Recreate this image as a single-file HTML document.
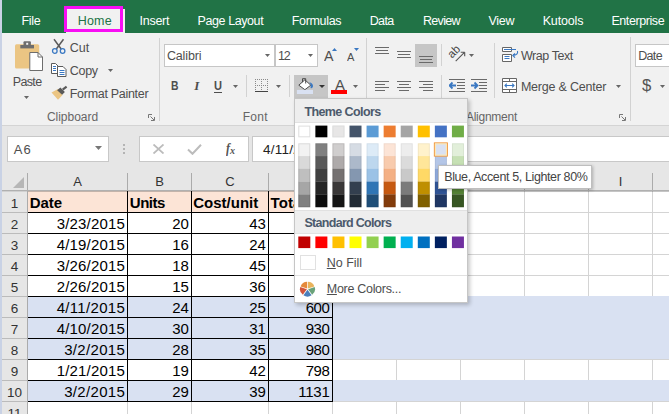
<!DOCTYPE html>
<html><head><meta charset="utf-8"><title>Excel</title>
<style>
html,body{margin:0;padding:0;}
body{width:669px;height:414px;overflow:hidden;position:relative;font-family:"Liberation Sans", sans-serif;background:#e6e6e6;}
#app{position:absolute;left:0;top:0;width:669px;height:414px;overflow:hidden;}
#app div,#app svg,#app span{position:absolute;}
#app span{white-space:nowrap;line-height:20px;}
</style></head><body><div id="app">
<div style="left:0px;top:0px;width:669px;height:414px;background:#e6e6e6;"></div>
<div style="left:0px;top:0px;width:2px;height:414px;background:#c9d2e5;"></div>
<div style="left:2px;top:0px;width:667px;height:33px;background:#217346;"></div>
<div style="left:2px;top:33px;width:667px;height:92px;background:#f1f1f1;"></div>
<div style="left:2px;top:125px;width:667px;height:1px;background:#d4d4d4;"></div>
<div style="left:66px;top:9px;width:59px;height:24px;background:#f1f1f1;"></div>
<div style="left:64px;top:6px;width:53px;height:20px;background:transparent;border:3px solid #f80ef4;"></div>
<span style="left:21.38px;top:11.40px;font-size:12.5px;color:#fff;letter-spacing:-0.235px;">File</span>
<span style="left:77.78px;top:11.40px;font-size:12.5px;color:#217346;letter-spacing:0.169px;">Home</span>
<span style="left:139.57px;top:11.40px;font-size:12.5px;color:#fff;letter-spacing:-0.283px;">Insert</span>
<span style="left:197.57px;top:11.40px;font-size:12.5px;color:#fff;letter-spacing:-0.415px;">Page Layout</span>
<span style="left:291.77px;top:11.40px;font-size:12.5px;color:#fff;letter-spacing:-0.335px;">Formulas</span>
<span style="left:369.68px;top:11.40px;font-size:12.5px;color:#fff;letter-spacing:-0.619px;">Data</span>
<span style="left:422.88px;top:11.40px;font-size:12.5px;color:#fff;letter-spacing:-0.650px;">Review</span>
<span style="left:488.38px;top:11.40px;font-size:12.5px;color:#fff;letter-spacing:-0.242px;">View</span>
<span style="left:542.67px;top:11.40px;font-size:12.5px;color:#fff;letter-spacing:-0.159px;">Kutools</span>
<span style="left:611.38px;top:11.40px;font-size:12.5px;color:#fff;letter-spacing:-0.415px;">Enterprise</span>
<span style="left:12.68px;top:72.00px;font-size:12.5px;color:#4e4e4e;letter-spacing:-0.630px;">Paste</span>
<span style="left:69.78px;top:38.00px;font-size:12.5px;color:#4e4e4e;letter-spacing:0.048px;">Cut</span>
<span style="left:69.78px;top:60.70px;font-size:12.5px;color:#4e4e4e;letter-spacing:-0.279px;">Copy</span>
<span style="left:69.78px;top:83.50px;font-size:12.5px;color:#4e4e4e;letter-spacing:-0.294px;">Format Painter</span>
<span style="left:46.90px;top:107.20px;font-size:12px;color:#666;letter-spacing:-0.022px;">Clipboard</span>
<span style="left:242.80px;top:107.20px;font-size:12px;color:#666;letter-spacing:0.228px;">Font</span>
<span style="left:465.90px;top:107.20px;font-size:12px;color:#666;letter-spacing:-0.247px;">Alignment</span>
<div style="left:159px;top:38px;width:1px;height:83px;background:#d2d2d2;"></div>
<div style="left:366px;top:38px;width:1px;height:83px;background:#d2d2d2;"></div>
<div style="left:630px;top:37px;width:1px;height:84px;background:#d2d2d2;"></div>
<div style="left:494px;top:43px;width:1px;height:55px;background:#d2d2d2;"></div>
<div style="left:441px;top:44px;width:1px;height:22px;background:#d2d2d2;"></div>
<div style="left:441px;top:75px;width:1px;height:23px;background:#d2d2d2;"></div>
<div style="left:246px;top:75px;width:1px;height:22px;background:#d2d2d2;"></div>
<div style="left:289px;top:75px;width:1px;height:22px;background:#d2d2d2;"></div>
<svg style="left:24.0px;top:95.7px" width="5" height="3" viewBox="0 0 5 3"><path d="M0 0H5L2.5 3Z" fill="#666"/></svg>
<svg style="left:108.0px;top:69.0px" width="5" height="3" viewBox="0 0 5 3"><path d="M0 0H5L2.5 3Z" fill="#666"/></svg>
<svg style="left:14px;top:40px" width="30" height="32" viewBox="0 0 30 32">
<rect x="1" y="4.200" width="24.200" height="24.200" rx="1.500" fill="#ebc583"/>
<rect x="6.300" y="5" width="13.700" height="3.400" fill="#6d6d6d"/><rect x="9.500" y="1.300" width="7.400" height="4.500" rx="1" fill="#6d6d6d"/><rect x="12.200" y="2.800" width="2" height="2" fill="#f1f1f1"/>
<path d="M15.800 12.500h8.200l4.500 4.500v13.500h-12.700z" fill="#fff" stroke="#6d6d6d" stroke-width="1"/><path d="M24 12.500v4.500h4.500" fill="none" stroke="#6d6d6d" stroke-width="1"/>
</svg>
<svg style="left:51px;top:38px" width="17" height="17" viewBox="0 0 17 17">
<path d="M3 1.200L10.200 11M12.500 1.200L5.300 11" stroke="#5a5a5a" stroke-width="1.500" fill="none"/>
<circle cx="3.800" cy="13" r="2.300" fill="none" stroke="#3a78c2" stroke-width="1.300"/><circle cx="11.600" cy="13" r="2.300" fill="none" stroke="#3a78c2" stroke-width="1.300"/>
</svg>
<svg style="left:50px;top:62px" width="18" height="16" viewBox="0 0 18 16">
<path d="M1.500 1.500h4l2.500 2.500v7.500h-6.500z" fill="#fff" stroke="#5a5a5a"/>
<path d="M3 4.500h3M3 6.500h3M3 8.500h3" stroke="#3a78c2" stroke-width="1"/>
<path d="M7.500 4.500h5.500l3 3v7h-8.500z" fill="#fff" stroke="#5a5a5a"/>
<path d="M9.500 8.500h5M9.500 10.500h5M9.500 12.500h5" stroke="#3a78c2" stroke-width="1"/>
</svg>
<svg style="left:50px;top:85px" width="18" height="16" viewBox="0 0 18 16">
<path d="M1.500 7.500L8 4L12.500 10L8 14.700z" fill="#ebc583"/>
<path d="M7.100 5.200L10.400 2.400L14.900 6.900L12.100 9.700z" fill="#5a5a5a"/>
<path d="M12.700 4.700L16.600 1.700" stroke="#5a5a5a" stroke-width="2.200"/>
</svg>
<svg style="left:148px;top:114px" width="7" height="7" viewBox="0 0 7 7"><path d="M0.500 4V0.500H4" fill="none" stroke="#777"/><path d="M2.500 2.500L6 6M6.500 3V6.500H3" fill="none" stroke="#777"/></svg>
<svg style="left:298px;top:114px" width="7" height="7" viewBox="0 0 7 7"><path d="M0.500 4V0.500H4" fill="none" stroke="#777"/><path d="M2.500 2.500L6 6M6.500 3V6.500H3" fill="none" stroke="#777"/></svg>
<svg style="left:619px;top:114px" width="7" height="7" viewBox="0 0 7 7"><path d="M0.500 4V0.500H4" fill="none" stroke="#777"/><path d="M2.500 2.500L6 6M6.500 3V6.500H3" fill="none" stroke="#777"/></svg>
<div style="left:164px;top:44px;width:111px;height:23px;background:#fff;border:1px solid #c6c6c6;box-sizing:border-box;"></div>
<div style="left:275px;top:44px;width:43px;height:23px;background:#fff;border:1px solid #c6c6c6;box-sizing:border-box;"></div>
<span style="left:166.88px;top:45.50px;font-size:12.5px;color:#4e4e4e;letter-spacing:-0.115px;">Calibri</span>
<span style="left:277.88px;top:45.50px;font-size:12.5px;color:#4e4e4e;letter-spacing:-1.156px;">12</span>
<svg style="left:264.5px;top:54.0px" width="5" height="3" viewBox="0 0 5 3"><path d="M0 0H5L2.5 3Z" fill="#666"/></svg>
<svg style="left:308.0px;top:54.0px" width="5" height="3" viewBox="0 0 5 3"><path d="M0 0H5L2.5 3Z" fill="#666"/></svg>
<span style="left:170.50px;top:75.50px;font-size:12.5px;color:#4e4e4e;font-weight:bold;transform:scaleX(0.830);transform-origin:0 50%;">B</span>
<span style="left:194.17px;top:76.30px;font-size:13px;color:#4e4e4e;font-weight:bold;font-style:italic;font-family:'Liberation Serif',serif;">I</span>
<span style="left:214.30px;top:75.80px;font-size:12.5px;color:#4e4e4e;font-weight:bold;text-decoration:underline;text-underline-offset:1.5px;transform:scaleX(0.886);transform-origin:0 50%;">U</span>
<svg style="left:232.5px;top:84.5px" width="5" height="3" viewBox="0 0 5 3"><path d="M0 0H5L2.5 3Z" fill="#666"/></svg>
<svg style="left:275.5px;top:84.5px" width="5" height="3" viewBox="0 0 5 3"><path d="M0 0H5L2.5 3Z" fill="#666"/></svg>
<svg style="left:255px;top:79px" width="13" height="13" viewBox="0 0 13 13" shape-rendering="crispEdges"><rect x="0" y="0" width="1" height="1" fill="#8a8a8a"/><rect x="2" y="0" width="1" height="1" fill="#8a8a8a"/><rect x="4" y="0" width="1" height="1" fill="#8a8a8a"/><rect x="6" y="0" width="1" height="1" fill="#8a8a8a"/><rect x="8" y="0" width="1" height="1" fill="#8a8a8a"/><rect x="10" y="0" width="1" height="1" fill="#8a8a8a"/><rect x="12" y="0" width="1" height="1" fill="#8a8a8a"/><rect x="0" y="6" width="1" height="1" fill="#8a8a8a"/><rect x="2" y="6" width="1" height="1" fill="#8a8a8a"/><rect x="4" y="6" width="1" height="1" fill="#8a8a8a"/><rect x="6" y="6" width="1" height="1" fill="#8a8a8a"/><rect x="8" y="6" width="1" height="1" fill="#8a8a8a"/><rect x="10" y="6" width="1" height="1" fill="#8a8a8a"/><rect x="12" y="6" width="1" height="1" fill="#8a8a8a"/><rect x="0" y="0" width="1" height="1" fill="#8a8a8a"/><rect x="0" y="2" width="1" height="1" fill="#8a8a8a"/><rect x="0" y="4" width="1" height="1" fill="#8a8a8a"/><rect x="0" y="6" width="1" height="1" fill="#8a8a8a"/><rect x="0" y="8" width="1" height="1" fill="#8a8a8a"/><rect x="0" y="10" width="1" height="1" fill="#8a8a8a"/><rect x="6" y="0" width="1" height="1" fill="#8a8a8a"/><rect x="6" y="2" width="1" height="1" fill="#8a8a8a"/><rect x="6" y="4" width="1" height="1" fill="#8a8a8a"/><rect x="6" y="6" width="1" height="1" fill="#8a8a8a"/><rect x="6" y="8" width="1" height="1" fill="#8a8a8a"/><rect x="6" y="10" width="1" height="1" fill="#8a8a8a"/><rect x="12" y="0" width="1" height="1" fill="#8a8a8a"/><rect x="12" y="2" width="1" height="1" fill="#8a8a8a"/><rect x="12" y="4" width="1" height="1" fill="#8a8a8a"/><rect x="12" y="6" width="1" height="1" fill="#8a8a8a"/><rect x="12" y="8" width="1" height="1" fill="#8a8a8a"/><rect x="12" y="10" width="1" height="1" fill="#8a8a8a"/><rect x="0" y="12" width="13" height="1" fill="#444"/></svg>
<div style="left:294px;top:75px;width:34px;height:23px;background:#c6c6c6;"></div>
<svg style="left:296px;top:76px" width="19" height="19" viewBox="0 0 19 19">
<path d="M2.800 9.200L8.900 3.800L14.800 9.200L8.900 13.700Z" fill="#fff" stroke="#4a4a4a" stroke-width="1"/>
<path d="M6.500 6.200V2.700H9.700V7.500" stroke="#4a4a4a" stroke-width="1" fill="none"/>
<path d="M13.300 6.200C16 6.500 18 9.500 16.500 11.500C15.500 12.800 14.300 12.500 14.600 11C14.900 9.500 14.800 8 13.300 6.200Z" fill="#3a78c2"/>
<rect x="0.900" y="13.900" width="16.100" height="4.100" fill="#d9e1f2"/></svg>
<svg style="left:318.5px;top:84.9px" width="6" height="3" viewBox="0 0 6 3"><path d="M0 0H6L3.0 3Z" fill="#333"/></svg>
<span style="left:324.30px;top:46.30px;font-size:14px;color:#4e4e4e;transform:scaleX(1.017);transform-origin:0 50%;">A</span>
<span style="left:347.00px;top:47.00px;font-size:11.5px;color:#4e4e4e;transform:scaleX(0.965);transform-origin:0 50%;">A</span>
<svg style="left:332px;top:47.500px" width="5" height="3" viewBox="0 0 5 3"><path d="M0 3H5L2.500 0Z" fill="#3a78c2"/></svg>
<svg style="left:354.200px;top:47.500px" width="5" height="3" viewBox="0 0 5 3"><path d="M0 0H5L2.500 3Z" fill="#3a78c2"/></svg>
<span style="left:335.00px;top:74.90px;font-size:14px;color:#4e4e4e;transform:scaleX(1.060);transform-origin:0 50%;">A</span>
<div style="left:331px;top:90px;width:16px;height:4px;background:#ff0000;"></div>
<svg style="left:353.0px;top:85.0px" width="5" height="3" viewBox="0 0 5 3"><path d="M0 0H5L2.5 3Z" fill="#666"/></svg>
<div style="left:375.0px;top:47px;width:14px;height:1px;background:#6a6a6a;"></div>
<div style="left:376.0px;top:50px;width:12px;height:1px;background:#6a6a6a;"></div>
<div style="left:375.0px;top:53px;width:14px;height:1px;background:#6a6a6a;"></div>
<div style="left:397.0px;top:51px;width:14px;height:1px;background:#6a6a6a;"></div>
<div style="left:398.0px;top:54px;width:12px;height:1px;background:#6a6a6a;"></div>
<div style="left:397.0px;top:57px;width:14px;height:1px;background:#6a6a6a;"></div>
<div style="left:415px;top:44px;width:22px;height:23px;background:#c6c6c6;"></div>
<div style="left:419.0px;top:56px;width:14px;height:1px;background:#6a6a6a;"></div>
<div style="left:420.0px;top:59px;width:12px;height:1px;background:#6a6a6a;"></div>
<div style="left:419.0px;top:62px;width:14px;height:1px;background:#6a6a6a;"></div>
<div style="left:375px;top:81px;width:14px;height:1px;background:#6a6a6a;"></div>
<div style="left:375px;top:84px;width:10px;height:1px;background:#6a6a6a;"></div>
<div style="left:375px;top:87px;width:14px;height:1px;background:#6a6a6a;"></div>
<div style="left:375px;top:90px;width:10px;height:1px;background:#6a6a6a;"></div>
<div style="left:397.0px;top:81px;width:14px;height:1px;background:#6a6a6a;"></div>
<div style="left:399.0px;top:84px;width:10px;height:1px;background:#6a6a6a;"></div>
<div style="left:397.0px;top:87px;width:14px;height:1px;background:#6a6a6a;"></div>
<div style="left:399.0px;top:90px;width:10px;height:1px;background:#6a6a6a;"></div>
<div style="left:419px;top:81px;width:14px;height:1px;background:#6a6a6a;"></div>
<div style="left:423px;top:84px;width:10px;height:1px;background:#6a6a6a;"></div>
<div style="left:419px;top:87px;width:14px;height:1px;background:#6a6a6a;"></div>
<div style="left:423px;top:90px;width:10px;height:1px;background:#6a6a6a;"></div>
<svg style="left:446px;top:44px" width="22" height="20" viewBox="0 0 22 20">
<text x="0" y="0" font-size="11.500" font-family="Liberation Sans, sans-serif" fill="#444" transform="translate(6 14.800) rotate(-45)">ab</text>
<path d="M9.700 17.200L18.700 8.200M18.700 8.200h-4M18.700 8.200v4" stroke="#555" stroke-width="1.100" fill="none"/></svg>
<svg style="left:469.0px;top:54.0px" width="5" height="3" viewBox="0 0 5 3"><path d="M0 0H5L2.5 3Z" fill="#666"/></svg>
<svg style="left:449px;top:79px" width="16" height="13" viewBox="0 0 16 13"><path d="M0 0.500h16M8 3.500h8M8 6.500h8M8 9.500h8M0 12.500h16" stroke="#6a6a6a"/><path d="M1 6.500h6M3.500 3.500l-3 3 3 3" stroke="#3a78c2" stroke-width="1.800" fill="none"/></svg>
<svg style="left:471px;top:79px" width="16" height="13" viewBox="0 0 16 13"><path d="M0 0.500h16M8 3.500h8M8 6.500h8M8 9.500h8M0 12.500h16" stroke="#6a6a6a"/><path d="M0 6.500h6M3.500 3.500l3 3-3 3" stroke="#3a78c2" stroke-width="1.800" fill="none"/></svg>
<svg style="left:502px;top:47px" width="17" height="15" viewBox="0 0 17 15">
<path d="M0.500 0.500h9v4h-9zM0.500 7.500h9v7h-9z" fill="#fff" stroke="#666"/>
<path d="M2 2.500h12M2.500 9.500h5M2.500 11.500h5" stroke="#3a78c2" stroke-width="1"/>
<path d="M15.500 4c.6 2.500-1 4.500-4.500 4.500M13 6.300L10.800 8.500l2.200 2.200" fill="none" stroke="#3a78c2" stroke-width="1.100"/></svg>
<span style="left:520.88px;top:46.20px;font-size:12.5px;color:#4e4e4e;letter-spacing:-0.420px;">Wrap Text</span>
<svg style="left:502px;top:78px" width="15" height="15" viewBox="0 0 15 15">
<path d="M0.500 0.500h14v14h-14zM0.500 3.500h14M0.500 11.500h14M7.500 0.500v3M7.500 11.500v3" fill="#fff" stroke="#666"/>
<path d="M3 7.500h9M4.800 5.700l-1.800 1.800 1.800 1.800M10.200 5.700l1.800 1.800-1.800 1.800" fill="none" stroke="#3a78c2" stroke-width="1.100"/></svg>
<span style="left:520.88px;top:76.50px;font-size:12.5px;color:#4e4e4e;letter-spacing:-0.214px;">Merge &amp; Center</span>
<svg style="left:616.0px;top:85.0px" width="5" height="3" viewBox="0 0 5 3"><path d="M0 0H5L2.5 3Z" fill="#666"/></svg>
<div style="left:635px;top:44px;width:40px;height:23px;background:#fff;border:1px solid #c6c6c6;box-sizing:border-box;"></div>
<span style="left:638.17px;top:46.00px;font-size:12.5px;color:#4e4e4e;letter-spacing:-0.652px;">Date</span>
<span style="left:641.90px;top:75.90px;font-size:17px;color:#555;transform:scaleX(0.982);transform-origin:0 50%;">$</span>
<svg style="left:659.5px;top:85.0px" width="5" height="3" viewBox="0 0 5 3"><path d="M0 0H5L2.5 3Z" fill="#666"/></svg>
<div style="left:7px;top:136px;width:102px;height:26px;background:#fff;border:1px solid #c8c8c8;box-sizing:border-box;"></div>
<span style="left:13.65px;top:139.50px;font-size:13px;color:#4e4e4e;letter-spacing:1.094px;">A6</span>
<svg style="left:95.0px;top:146.0px" width="7" height="4" viewBox="0 0 7 4"><path d="M0 0H7L3.5 4Z" fill="#777"/></svg>
<div style="left:123px;top:144px;width:2px;height:2px;background:#b4b4b4;"></div>
<div style="left:123px;top:148px;width:2px;height:2px;background:#b4b4b4;"></div>
<div style="left:123px;top:152px;width:2px;height:2px;background:#b4b4b4;"></div>
<div style="left:139px;top:136px;width:110px;height:26px;background:#fff;border:1px solid #c8c8c8;box-sizing:border-box;"></div>
<div style="left:252px;top:136px;width:420px;height:26px;background:#fff;border:1px solid #c8c8c8;box-sizing:border-box;"></div>
<svg style="left:152.500px;top:144px" width="11" height="10" viewBox="0 0 11 10"><path d="M0.500 0.500L10.500 9.500M10.500 0.500L0.500 9.500" stroke="#bcbcbc" stroke-width="1.800"/></svg>
<svg style="left:187px;top:144px" width="15" height="11" viewBox="0 0 15 11"><path d="M1 5.500L5.500 9.800L14 0.800" stroke="#bcbcbc" stroke-width="2" fill="none"/></svg>
<span style="left:225.50px;top:138.50px;font-size:14px;color:#555;font-weight:bold;font-style:italic;font-family:'Liberation Serif',serif;transform:scaleX(0.856);transform-origin:0 50%;">f</span>
<span style="left:229.50px;top:141.00px;font-size:9.5px;color:#555;font-weight:bold;font-style:italic;font-family:'Liberation Serif',serif;transform:scaleX(1.053);transform-origin:0 50%;">x</span>
<span style="left:263.12px;top:139.60px;font-size:13.5px;color:#222;letter-spacing:0.186px;">4/11/2015</span>
<svg style="left:13px;top:177px" width="11" height="11" viewBox="0 0 11 11"><path d="M11 0V11H0Z" fill="#b6b6b6"/></svg>
<div style="left:27px;top:173px;width:1px;height:18px;background:#ababab;"></div>
<span style="left:73.16px;top:172.30px;font-size:13px;color:#333;text-align:center;">A</span>
<div style="left:127px;top:173px;width:1px;height:18px;background:#ababab;"></div>
<span style="left:155.16px;top:172.30px;font-size:13px;color:#333;text-align:center;">B</span>
<div style="left:191px;top:173px;width:1px;height:18px;background:#ababab;"></div>
<span style="left:225.30px;top:172.30px;font-size:13px;color:#333;text-align:center;">C</span>
<div style="left:268px;top:173px;width:1px;height:18px;background:#ababab;"></div>
<span style="left:295.80px;top:172.30px;font-size:13px;color:#333;text-align:center;">D</span>
<div style="left:332px;top:173px;width:1px;height:18px;background:#ababab;"></div>
<span style="left:360.16px;top:172.30px;font-size:13px;color:#333;text-align:center;">E</span>
<div style="left:396px;top:173px;width:1px;height:18px;background:#ababab;"></div>
<span style="left:424.52px;top:172.30px;font-size:13px;color:#333;text-align:center;">F</span>
<div style="left:460px;top:173px;width:1px;height:18px;background:#ababab;"></div>
<span style="left:487.44px;top:172.30px;font-size:13px;color:#333;text-align:center;">G</span>
<div style="left:524px;top:173px;width:1px;height:18px;background:#ababab;"></div>
<span style="left:551.80px;top:172.30px;font-size:13px;color:#333;text-align:center;">H</span>
<div style="left:588px;top:173px;width:1px;height:18px;background:#ababab;"></div>
<span style="left:618.69px;top:172.30px;font-size:13px;color:#333;text-align:center;">I</span>
<div style="left:652px;top:173px;width:1px;height:18px;background:#ababab;"></div>
<span style="left:681.25px;top:172.30px;font-size:13px;color:#333;text-align:center;">J</span>
<div style="left:2px;top:190px;width:667px;height:1px;background:#b0b0b0;"></div>
<div style="left:2px;top:191px;width:26px;height:1px;background:#d0d0d0;"></div>
<div style="left:28px;top:191px;width:641px;height:223px;background:#fff;"></div>
<div style="left:332px;top:191px;width:1px;height:223px;background:#d4d4d4;"></div>
<div style="left:396px;top:191px;width:1px;height:223px;background:#d4d4d4;"></div>
<div style="left:460px;top:191px;width:1px;height:223px;background:#d4d4d4;"></div>
<div style="left:524px;top:191px;width:1px;height:223px;background:#d4d4d4;"></div>
<div style="left:588px;top:191px;width:1px;height:223px;background:#d4d4d4;"></div>
<div style="left:652px;top:191px;width:1px;height:223px;background:#d4d4d4;"></div>
<div style="left:716px;top:191px;width:1px;height:223px;background:#d4d4d4;"></div>
<div style="left:332px;top:212px;width:337px;height:1px;background:#d4d4d4;"></div>
<div style="left:332px;top:233px;width:337px;height:1px;background:#d4d4d4;"></div>
<div style="left:332px;top:254px;width:337px;height:1px;background:#d4d4d4;"></div>
<div style="left:332px;top:275px;width:337px;height:1px;background:#d4d4d4;"></div>
<div style="left:332px;top:296px;width:337px;height:1px;background:#d4d4d4;"></div>
<div style="left:332px;top:317px;width:337px;height:1px;background:#d4d4d4;"></div>
<div style="left:332px;top:338px;width:337px;height:1px;background:#d4d4d4;"></div>
<div style="left:332px;top:359px;width:337px;height:1px;background:#d4d4d4;"></div>
<div style="left:332px;top:380px;width:337px;height:1px;background:#d4d4d4;"></div>
<div style="left:332px;top:401px;width:337px;height:1px;background:#d4d4d4;"></div>
<div style="left:332px;top:422px;width:337px;height:1px;background:#d4d4d4;"></div>
<div style="left:127px;top:402px;width:1px;height:12px;background:#d4d4d4;"></div>
<div style="left:191px;top:402px;width:1px;height:12px;background:#d4d4d4;"></div>
<div style="left:268px;top:402px;width:1px;height:12px;background:#d4d4d4;"></div>
<div style="left:27px;top:191px;width:1px;height:223px;background:#ababab;"></div>
<span style="left:10.74px;top:194.00px;font-size:13.5px;color:#333;">1</span>
<span style="left:10.74px;top:215.00px;font-size:13.5px;color:#333;">2</span>
<span style="left:10.74px;top:236.00px;font-size:13.5px;color:#333;">3</span>
<span style="left:10.74px;top:257.00px;font-size:13.5px;color:#333;">4</span>
<span style="left:10.74px;top:278.00px;font-size:13.5px;color:#333;">5</span>
<span style="left:10.74px;top:299.00px;font-size:13.5px;color:#333;">6</span>
<span style="left:10.74px;top:320.00px;font-size:13.5px;color:#333;">7</span>
<span style="left:10.74px;top:341.00px;font-size:13.5px;color:#333;">8</span>
<span style="left:10.74px;top:362.00px;font-size:13.5px;color:#333;">9</span>
<span style="left:6.98px;top:383.00px;font-size:13.5px;color:#333;">10</span>
<span style="left:7.49px;top:404.00px;font-size:13.5px;color:#333;">11</span>
<div style="left:2px;top:212px;width:25px;height:1px;background:#bbbbbb;"></div>
<div style="left:2px;top:233px;width:25px;height:1px;background:#bbbbbb;"></div>
<div style="left:2px;top:254px;width:25px;height:1px;background:#bbbbbb;"></div>
<div style="left:2px;top:275px;width:25px;height:1px;background:#bbbbbb;"></div>
<div style="left:2px;top:296px;width:25px;height:1px;background:#bbbbbb;"></div>
<div style="left:2px;top:317px;width:25px;height:1px;background:#bbbbbb;"></div>
<div style="left:2px;top:338px;width:25px;height:1px;background:#bbbbbb;"></div>
<div style="left:2px;top:359px;width:25px;height:1px;background:#bbbbbb;"></div>
<div style="left:2px;top:380px;width:25px;height:1px;background:#bbbbbb;"></div>
<div style="left:2px;top:401px;width:25px;height:1px;background:#bbbbbb;"></div>
<div style="left:2px;top:422px;width:25px;height:1px;background:#bbbbbb;"></div>
<div style="left:28px;top:191px;width:305px;height:21px;background:#fce4d6;"></div>
<div style="left:28px;top:296px;width:641px;height:63px;background:#d9e1f2;"></div>
<div style="left:28px;top:380px;width:641px;height:21px;background:#d9e1f2;"></div>
<div style="left:28px;top:191px;width:641px;height:1px;background:rgba(90,90,90,0.35);"></div>
<div style="left:127px;top:191px;width:1px;height:211px;background:#000;"></div>
<div style="left:191px;top:191px;width:1px;height:211px;background:#000;"></div>
<div style="left:268px;top:191px;width:1px;height:211px;background:#000;"></div>
<div style="left:332px;top:191px;width:1px;height:211px;background:#000;"></div>
<div style="left:28px;top:212px;width:305px;height:1px;background:#000;"></div>
<div style="left:28px;top:233px;width:305px;height:1px;background:#000;"></div>
<div style="left:28px;top:254px;width:305px;height:1px;background:#000;"></div>
<div style="left:28px;top:275px;width:305px;height:1px;background:#000;"></div>
<div style="left:28px;top:296px;width:305px;height:1px;background:#000;"></div>
<div style="left:28px;top:317px;width:305px;height:1px;background:#000;"></div>
<div style="left:28px;top:338px;width:305px;height:1px;background:#000;"></div>
<div style="left:28px;top:359px;width:305px;height:1px;background:#000;"></div>
<div style="left:28px;top:380px;width:305px;height:1px;background:#000;"></div>
<div style="left:28px;top:401px;width:305px;height:1px;background:#000;"></div>
<span style="left:29.85px;top:193.20px;font-size:15px;color:#000;font-weight:bold;letter-spacing:-0.105px;">Date</span>
<span style="left:129.85px;top:193.20px;font-size:15px;color:#000;font-weight:bold;letter-spacing:-0.500px;">Units</span>
<span style="left:193.25px;top:193.20px;font-size:15px;color:#000;font-weight:bold;">Cost/unit</span>
<span style="left:270.45px;top:193.20px;font-size:15px;color:#000;font-weight:bold;letter-spacing:0.145px;">Total</span>
<span style="left:56.64px;top:214.20px;font-size:15px;color:#000;letter-spacing:0.184px;">3/23/2015</span>
<span style="left:172.29px;top:214.20px;font-size:15px;color:#000;letter-spacing:-0.127px;">20</span>
<span style="left:249.29px;top:214.20px;font-size:15px;color:#000;letter-spacing:-0.127px;">43</span>
<span style="left:305.76px;top:214.20px;font-size:15px;color:#000;letter-spacing:-0.471px;">860</span>
<span style="left:56.64px;top:235.20px;font-size:15px;color:#000;letter-spacing:0.184px;">4/19/2015</span>
<span style="left:172.29px;top:235.20px;font-size:15px;color:#000;letter-spacing:-0.127px;">16</span>
<span style="left:249.29px;top:235.20px;font-size:15px;color:#000;letter-spacing:-0.127px;">24</span>
<span style="left:305.76px;top:235.20px;font-size:15px;color:#000;letter-spacing:-0.471px;">384</span>
<span style="left:56.64px;top:256.20px;font-size:15px;color:#000;letter-spacing:0.184px;">3/26/2015</span>
<span style="left:172.29px;top:256.20px;font-size:15px;color:#000;letter-spacing:-0.127px;">18</span>
<span style="left:249.29px;top:256.20px;font-size:15px;color:#000;letter-spacing:-0.127px;">45</span>
<span style="left:305.76px;top:256.20px;font-size:15px;color:#000;letter-spacing:-0.471px;">810</span>
<span style="left:56.64px;top:277.20px;font-size:15px;color:#000;letter-spacing:0.184px;">2/26/2015</span>
<span style="left:172.29px;top:277.20px;font-size:15px;color:#000;letter-spacing:-0.127px;">15</span>
<span style="left:249.29px;top:277.20px;font-size:15px;color:#000;letter-spacing:-0.127px;">36</span>
<span style="left:305.76px;top:277.20px;font-size:15px;color:#000;letter-spacing:-0.471px;">540</span>
<span style="left:56.64px;top:298.20px;font-size:15px;color:#000;letter-spacing:0.323px;">4/11/2015</span>
<span style="left:172.29px;top:298.20px;font-size:15px;color:#000;letter-spacing:-0.127px;">24</span>
<span style="left:249.29px;top:298.20px;font-size:15px;color:#000;letter-spacing:-0.127px;">25</span>
<span style="left:305.76px;top:298.20px;font-size:15px;color:#000;letter-spacing:-0.471px;">600</span>
<span style="left:56.64px;top:319.20px;font-size:15px;color:#000;letter-spacing:0.184px;">4/10/2015</span>
<span style="left:172.29px;top:319.20px;font-size:15px;color:#000;letter-spacing:-0.127px;">30</span>
<span style="left:249.29px;top:319.20px;font-size:15px;color:#000;letter-spacing:-0.127px;">31</span>
<span style="left:305.76px;top:319.20px;font-size:15px;color:#000;letter-spacing:-0.471px;">930</span>
<span style="left:64.17px;top:340.20px;font-size:15px;color:#000;letter-spacing:0.327px;">3/2/2015</span>
<span style="left:172.29px;top:340.20px;font-size:15px;color:#000;letter-spacing:-0.127px;">28</span>
<span style="left:249.29px;top:340.20px;font-size:15px;color:#000;letter-spacing:-0.127px;">35</span>
<span style="left:305.76px;top:340.20px;font-size:15px;color:#000;letter-spacing:-0.471px;">980</span>
<span style="left:56.64px;top:361.20px;font-size:15px;color:#000;letter-spacing:0.184px;">1/21/2015</span>
<span style="left:172.29px;top:361.20px;font-size:15px;color:#000;letter-spacing:-0.127px;">19</span>
<span style="left:249.29px;top:361.20px;font-size:15px;color:#000;letter-spacing:-0.127px;">42</span>
<span style="left:305.76px;top:361.20px;font-size:15px;color:#000;letter-spacing:-0.471px;">798</span>
<span style="left:64.17px;top:382.20px;font-size:15px;color:#000;letter-spacing:0.327px;">3/2/2015</span>
<span style="left:172.29px;top:382.20px;font-size:15px;color:#000;letter-spacing:-0.127px;">29</span>
<span style="left:249.29px;top:382.20px;font-size:15px;color:#000;letter-spacing:-0.127px;">39</span>
<span style="left:298.23px;top:382.20px;font-size:15px;color:#000;letter-spacing:-0.215px;">1131</span>
<div style="left:294px;top:98px;width:174px;height:205px;background:#fff;border:1px solid #c6c6c6;box-sizing:border-box;box-shadow:1.5px 1.5px 4px rgba(0,0,0,0.22);"></div>
<div style="left:295px;top:99px;width:172px;height:23px;background:#eeeeee;"></div>
<div style="left:295px;top:211px;width:172px;height:22px;background:#eeeeee;"></div>
<div style="left:295px;top:122px;width:172px;height:1px;background:#e1e1e1;"></div>
<div style="left:295px;top:233px;width:172px;height:1px;background:#e1e1e1;"></div>
<div style="left:295px;top:210px;width:172px;height:1px;background:#e1e1e1;"></div>
<span style="left:304.38px;top:101.70px;font-size:12.5px;color:#4c5a6c;font-weight:bold;letter-spacing:-0.592px;">Theme Colors</span>
<span style="left:304.38px;top:212.70px;font-size:12.5px;color:#4c5a6c;font-weight:bold;letter-spacing:-0.693px;">Standard Colors</span>
<svg style="left:0;top:0" width="669" height="414" viewBox="0 0 669 414" shape-rendering="geometricPrecision"><rect x="298.30" y="125.6" width="12" height="11.7" fill="#FFFFFF"/><rect x="298.80" y="126.1" width="11" height="10.7" fill="none" stroke="#dedede"/><rect x="298.30" y="143.30" width="12" height="12.9" fill="#F2F2F2"/><rect x="298.30" y="156.06" width="12" height="12.9" fill="#D9D9D9"/><rect x="298.30" y="168.82" width="12" height="12.9" fill="#BFBFBF"/><rect x="298.30" y="181.58" width="12" height="12.9" fill="#A6A6A6"/><rect x="298.30" y="194.34" width="12" height="12.9" fill="#808080"/><rect x="298.80" y="143.8" width="11" height="63" fill="none" stroke="rgba(0,0,0,0.1)"/><rect x="298.30" y="236.5" width="12" height="11.6" fill="#C00000"/><rect x="315.37" y="125.6" width="12" height="11.7" fill="#000000"/><rect x="315.37" y="143.30" width="12" height="12.9" fill="#808080"/><rect x="315.37" y="156.06" width="12" height="12.9" fill="#595959"/><rect x="315.37" y="168.82" width="12" height="12.9" fill="#404040"/><rect x="315.37" y="181.58" width="12" height="12.9" fill="#262626"/><rect x="315.37" y="194.34" width="12" height="12.9" fill="#0D0D0D"/><rect x="315.87" y="143.8" width="11" height="63" fill="none" stroke="rgba(0,0,0,0.05)"/><rect x="315.37" y="236.5" width="12" height="11.6" fill="#FF0000"/><rect x="332.44" y="125.6" width="12" height="11.7" fill="#E7E6E6"/><rect x="332.94" y="126.1" width="11" height="10.7" fill="none" stroke="#dedede"/><rect x="332.44" y="143.30" width="12" height="12.9" fill="#D0CECE"/><rect x="332.44" y="156.06" width="12" height="12.9" fill="#AEAAAA"/><rect x="332.44" y="168.82" width="12" height="12.9" fill="#757171"/><rect x="332.44" y="181.58" width="12" height="12.9" fill="#3A3838"/><rect x="332.44" y="194.34" width="12" height="12.9" fill="#161616"/><rect x="332.94" y="143.8" width="11" height="63" fill="none" stroke="rgba(0,0,0,0.1)"/><rect x="332.44" y="236.5" width="12" height="11.6" fill="#FFC000"/><rect x="349.51" y="125.6" width="12" height="11.7" fill="#44546A"/><rect x="349.51" y="143.30" width="12" height="12.9" fill="#D6DCE4"/><rect x="349.51" y="156.06" width="12" height="12.9" fill="#ACB9CA"/><rect x="349.51" y="168.82" width="12" height="12.9" fill="#8497B0"/><rect x="349.51" y="181.58" width="12" height="12.9" fill="#333F4F"/><rect x="349.51" y="194.34" width="12" height="12.9" fill="#222B35"/><rect x="350.01" y="143.8" width="11" height="63" fill="none" stroke="rgba(0,0,0,0.05)"/><rect x="349.51" y="236.5" width="12" height="11.6" fill="#FFFF00"/><rect x="366.58" y="125.6" width="12" height="11.7" fill="#5B9BD5"/><rect x="366.58" y="143.30" width="12" height="12.9" fill="#DDEBF7"/><rect x="366.58" y="156.06" width="12" height="12.9" fill="#BDD7EE"/><rect x="366.58" y="168.82" width="12" height="12.9" fill="#9BC2E6"/><rect x="366.58" y="181.58" width="12" height="12.9" fill="#2F75B5"/><rect x="366.58" y="194.34" width="12" height="12.9" fill="#1F4E78"/><rect x="367.08" y="143.8" width="11" height="63" fill="none" stroke="rgba(0,0,0,0.05)"/><rect x="366.58" y="236.5" width="12" height="11.6" fill="#92D050"/><rect x="383.65" y="125.6" width="12" height="11.7" fill="#ED7D31"/><rect x="383.65" y="143.30" width="12" height="12.9" fill="#FCE4D6"/><rect x="383.65" y="156.06" width="12" height="12.9" fill="#F8CBAD"/><rect x="383.65" y="168.82" width="12" height="12.9" fill="#F4B084"/><rect x="383.65" y="181.58" width="12" height="12.9" fill="#C65911"/><rect x="383.65" y="194.34" width="12" height="12.9" fill="#833C0C"/><rect x="384.15" y="143.8" width="11" height="63" fill="none" stroke="rgba(0,0,0,0.05)"/><rect x="383.65" y="236.5" width="12" height="11.6" fill="#00B050"/><rect x="400.72" y="125.6" width="12" height="11.7" fill="#A5A5A5"/><rect x="400.72" y="143.30" width="12" height="12.9" fill="#EDEDED"/><rect x="400.72" y="156.06" width="12" height="12.9" fill="#DBDBDB"/><rect x="400.72" y="168.82" width="12" height="12.9" fill="#C9C9C9"/><rect x="400.72" y="181.58" width="12" height="12.9" fill="#7B7B7B"/><rect x="400.72" y="194.34" width="12" height="12.9" fill="#525252"/><rect x="401.22" y="143.8" width="11" height="63" fill="none" stroke="rgba(0,0,0,0.05)"/><rect x="400.72" y="236.5" width="12" height="11.6" fill="#00B0F0"/><rect x="417.79" y="125.6" width="12" height="11.7" fill="#FFC000"/><rect x="417.79" y="143.30" width="12" height="12.9" fill="#FFF2CC"/><rect x="417.79" y="156.06" width="12" height="12.9" fill="#FFE699"/><rect x="417.79" y="168.82" width="12" height="12.9" fill="#FFD966"/><rect x="417.79" y="181.58" width="12" height="12.9" fill="#BF8F00"/><rect x="417.79" y="194.34" width="12" height="12.9" fill="#806000"/><rect x="418.29" y="143.8" width="11" height="63" fill="none" stroke="rgba(0,0,0,0.05)"/><rect x="417.79" y="236.5" width="12" height="11.6" fill="#0070C0"/><rect x="434.86" y="125.6" width="12" height="11.7" fill="#4472C4"/><rect x="434.86" y="143.30" width="12" height="12.9" fill="#D9E1F2"/><rect x="434.86" y="156.06" width="12" height="12.9" fill="#B4C6E7"/><rect x="434.86" y="168.82" width="12" height="12.9" fill="#8EA9DB"/><rect x="434.86" y="181.58" width="12" height="12.9" fill="#305496"/><rect x="434.86" y="194.34" width="12" height="12.9" fill="#203764"/><rect x="435.36" y="143.8" width="11" height="63" fill="none" stroke="rgba(0,0,0,0.05)"/><rect x="434.86" y="236.5" width="12" height="11.6" fill="#002060"/><rect x="451.93" y="125.6" width="12" height="11.7" fill="#70AD47"/><rect x="451.93" y="143.30" width="12" height="12.9" fill="#E2EFDA"/><rect x="451.93" y="156.06" width="12" height="12.9" fill="#C6E0B4"/><rect x="451.93" y="168.82" width="12" height="12.9" fill="#A9D08E"/><rect x="451.93" y="181.58" width="12" height="12.9" fill="#548235"/><rect x="451.93" y="194.34" width="12" height="12.9" fill="#375623"/><rect x="452.43" y="143.8" width="11" height="63" fill="none" stroke="rgba(0,0,0,0.05)"/><rect x="451.93" y="236.5" width="12" height="11.6" fill="#7030A0"/><rect x="434.36" y="142.9" width="13" height="13.2" fill="#d9e1f2" stroke="#f29436" stroke-width="1"/><rect x="435.36" y="143.9" width="11" height="11.2" fill="none" stroke="#ffe9b0" stroke-width="1"/></svg>
<div style="left:300px;top:255px;width:16px;height:15px;background:#fff;border:1px solid #e1e1e1;box-sizing:border-box;"></div>
<span style="left:326.77px;top:253.00px;font-size:12.5px;color:#4e4e4e;letter-spacing:-0.015px;"><u>N</u>o Fill</span>
<div style="left:295px;top:275px;width:172px;height:1px;background:#e1e1e1;"></div>
<span style="left:326.77px;top:278.80px;font-size:12.5px;color:#4e4e4e;letter-spacing:-0.297px;"><u>M</u>ore Colors...</span>
<svg style="left:299px;top:281px" width="17" height="16" viewBox="0 0 17 16">
<g transform="translate(8.500 8) scale(0.92)">
<path d="M0 0L0-7.500A7.500 7.500 0 0 1 7.100-2.300Z" fill="#e9b35c" transform="translate(0.400 -0.500)"/>
<path d="M0 0L7.100-2.300A7.500 7.500 0 0 1 4.400 6.100Z" fill="#6aa27a" transform="translate(0.700 0.200)"/>
<path d="M0 0L4.400 6.100A7.500 7.500 0 0 1-4.400 6.100Z" fill="#4a7ebb" transform="translate(0 0.700)"/>
<path d="M0 0L-4.400 6.100A7.500 7.500 0 0 1-7.100-2.300Z" fill="#d2553d" transform="translate(-0.700 0.200)"/>
<path d="M0 0L-7.100-2.300A7.500 7.500 0 0 1 0-7.500Z" fill="#e58a3c" transform="translate(-0.400 -0.500)"/>
</g></svg>
<div style="left:438px;top:165px;width:154px;height:23.500px;background:#fff;border:1px solid #bebebe;box-sizing:border-box;box-shadow:1px 1px 3px rgba(0,0,0,0.25);"></div>
<span style="left:444.18px;top:166.80px;font-size:12.5px;color:#444;letter-spacing:-0.382px;">Blue, Accent 5, Lighter 80%</span>
</div></body></html>
